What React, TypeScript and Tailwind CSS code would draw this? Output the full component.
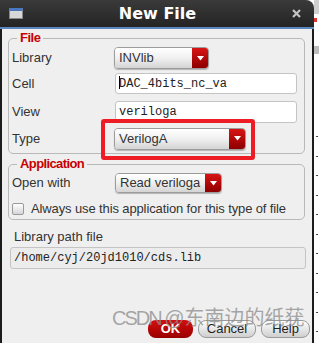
import React from "react"

function Dropdown({ width, text }: { width: string; text: string }) {
  return (
    <div className={`${width} flex h-full overflow-hidden rounded-[4px] border border-[#9c9c9c] shadow-[0_1px_1px_rgba(0,0,0,0.25)]`}>
      <div className="flex flex-1 items-center bg-gradient-to-b from-[#ffffff] via-[#f0f0f0] to-[#d4d4d4] pl-[4px] text-[13px] text-[#333]">
        {text}
      </div>
      <div className="flex w-[16px] items-center justify-center bg-gradient-to-b from-[#d81414] to-[#8e0000]">
        <svg width="7" height="5" viewBox="0 0 7 5">
          <polygon points="0,0 7,0 3.5,4.5" fill="#fff" />
        </svg>
      </div>
    </div>
  )
}

function TextBox({ children, className = "" }: { children: React.ReactNode; className?: string }) {
  return (
    <div className={`flex h-full items-center rounded-[3px] border border-[#c4c4c4] pl-[3px] font-['Liberation_Mono',monospace] text-[12px] text-[#222] ${className}`}>
      {children}
    </div>
  )
}

function Button({ label, primary = false, width }: { label: string; primary?: boolean; width: string }) {
  return (
    <div
      className={`${width} flex h-[18px] items-center justify-center rounded-[8px] text-[13px] ${
        primary
          ? "bg-gradient-to-b from-[#d41010] to-[#9a0000] font-bold text-white"
          : "border border-[#9a9a9a] bg-gradient-to-b from-[#ffffff] to-[#cfcfcf] text-[#222]"
      }`}
    >
      {label}
    </div>
  )
}

export default function App() {
  const dots = Array.from({ length: 11 })
  return (
    <div className="flex h-[343px] w-[319px] overflow-hidden bg-white font-['Liberation_Sans',sans-serif] text-[#333]">
      {/* dialog window */}
      <div className="flex w-[314px] flex-col">
        <div className="flex h-[29px] items-center rounded-tr-[8px] border-b-2 border-[#5b86bf] bg-gradient-to-b from-[#3a3a3a] to-[#242424] px-[9px]">
          <div className="h-[11px] w-[14px] border border-[#888] border-t-[3px] border-t-[#4a78c0] bg-[#d8d8d8]" />
          <div className="flex-1 text-center font-['DejaVu_Sans',sans-serif] text-[16px] font-bold text-white">New File</div>
          <svg width="9" height="9" viewBox="0 0 9 9" className="mr-[4px]">
            <path d="M1 1 L8 8 M8 1 L1 8" stroke="#c4c4c4" strokeWidth="2.2" />
          </svg>
        </div>

        <div className="relative flex flex-1 flex-col border-l-2 border-r-2 border-[#1c1c1c] bg-[#efefef] pl-[6px] pr-[7px]">
          <fieldset className="mt-[1px] flex flex-col rounded-[5px] border border-[#b9b9b9] pb-[5px] pl-[3px]">
            <legend className="ml-[5px] px-[3px] text-[13px] font-bold leading-[16px] tracking-[-0.5px] text-[#c80000]">File</legend>
            <div className="mt-[1px] grid h-[22px] grid-cols-[102px_1fr] items-center">
              <span className="text-[13px]">Library</span>
              <Dropdown width="w-[95px]" text="INVlib" />
            </div>
            <div className="mt-[4px] grid h-[21px] grid-cols-[103px_182px] items-center">
              <span className="text-[13px]">Cell</span>
              <TextBox className="bg-white">
                <span className="relative">
                  <span className="absolute left-0 top-[1px] h-[13px] w-[1px] bg-black" />
                  DAC_4bits_nc_va
                </span>
              </TextBox>
            </div>
            <div className="mt-[7px] grid h-[22px] grid-cols-[103px_182px] items-center">
              <span className="text-[13px]">View</span>
              <TextBox className="bg-white">veriloga</TextBox>
            </div>
            <div className="mt-[5px] grid h-[20px] grid-cols-[102px_1fr] items-center">
              <span className="text-[13px]">Type</span>
              <div className="relative h-full w-[132px]">
                <Dropdown width="w-[132px]" text="VerilogA" />
                <div className="absolute -left-[13px] -top-[9px] h-[41px] w-[154px] rounded-[3px] border-[4px] border-[#ee1d25]" />
              </div>
            </div>
          </fieldset>

          <fieldset className="mt-[2px] flex flex-col rounded-[5px] border border-[#b9b9b9] pb-[2px] pl-[3px]">
            <legend className="ml-[5px] px-[3px] text-[13px] font-bold leading-[16px] tracking-[-0.6px] text-[#c80000]">Application</legend>
            <div className="mt-[1px] grid h-[20px] grid-cols-[103px_1fr] items-center">
              <span className="text-[13px]">Open with</span>
              <Dropdown width="w-[107px]" text="Read veriloga" />
            </div>
            <div className="mt-[8px] flex h-[16px] items-center gap-[7px]">
              <div className="h-[12px] w-[12px] rounded-[2px] border border-[#9a9a9a] bg-gradient-to-b from-[#ffffff] to-[#d6d6d6]" />
              <span className="text-[13px] tracking-[-0.12px]">Always use this application for this type of file</span>
            </div>
          </fieldset>

          <div className="ml-[6px] mt-[9px] text-[13px] leading-[16px]">Library path file</div>
          <div className="-mr-[1px] ml-[2px] mt-[2px] h-[22px]">
            <TextBox className="bg-[#ececec] pl-[3px]">/home/cyj/20jd1010/cds.lib</TextBox>
          </div>

          <div className="flex-1" />
          <div className="-mr-[5px] mb-[5px] flex justify-end gap-[5px]">
            <Button label="OK" primary width="w-[45px]" />
            <Button label="Cancel" width="w-[58px]" />
            <Button label="Help" width="w-[49px]" />
          </div>

          {/* CSDN watermark over the buttons */}
          <div className="pointer-events-none absolute left-[110px] top-[276px] whitespace-nowrap text-[20px] leading-[24px] text-[#8c8c8c]/75">
            <span className="tracking-[-2px]">CSDN @</span>
            <span className="ml-[2px] font-['Noto_Sans_CJK_SC',sans-serif]">东南边的纸莸</span>
          </div>
        </div>
      </div>

      {/* background window strip */}
      <div className="flex w-[5px] flex-col bg-white">
        <div className="h-[14px] bg-[#cfcfcf]" />
        <div className="mt-[4px] h-[4px] w-[3px] bg-[#d33]" />
        <div className="mt-[24px] h-[8px] bg-[#bdbdbd]" />
        <div className="mt-[82px] flex flex-col gap-[18.5px] pl-[2px]">
          {dots.map((_, i) => (
            <div key={i} className="h-[1px] w-[2px] bg-[#444]" />
          ))}
        </div>
      </div>
    </div>
  )
}
